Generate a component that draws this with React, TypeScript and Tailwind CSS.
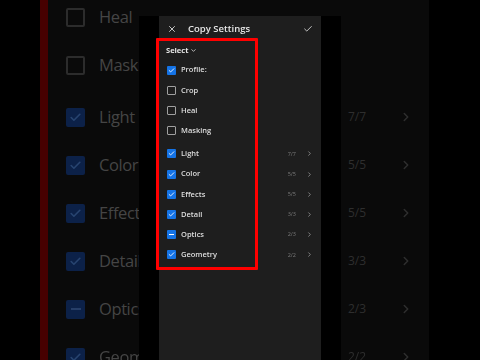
import { X, Check, ChevronDown, ChevronRight } from 'lucide-react'

type Item = { label: string; state: 'on' | 'off' | 'mixed'; count?: string; gap?: boolean }

const items: Item[] = [
  { label: 'Profile:', state: 'on' },
  { label: 'Crop', state: 'off' },
  { label: 'Heal', state: 'off' },
  { label: 'Masking', state: 'off' },
  { label: 'Light', state: 'on', count: '7/7', gap: true },
  { label: 'Color', state: 'on', count: '5/5' },
  { label: 'Effects', state: 'on', count: '5/5' },
  { label: 'Detail', state: 'on', count: '3/3' },
  { label: 'Optics', state: 'mixed', count: '2/3' },
  { label: 'Geometry', state: 'on', count: '2/2' },
]

function Box({ state, big }: { state: Item['state']; big?: boolean }) {
  const size = big ? 'w-[19px] h-[19px] rounded-[2px]' : 'w-[9px] h-[9px] rounded-[1px]'
  if (state === 'off') {
    return <div className={`${size} shrink-0 border ${big ? 'border-[#2c2c2c] border-2' : 'border-[#a0a0a0]'}`} />
  }
  return (
    <div className={`${size} shrink-0 flex items-center justify-center ${big ? 'bg-[#0c2148]' : 'bg-[#1473e6]'}`}>
      {state === 'mixed' ? (
        <div className={big ? 'w-[10px] h-[2px] bg-[#263e68]' : 'w-[5px] h-[1px] bg-white'} />
      ) : (
        <Check className={big ? 'w-[13px] h-[13px] text-[#284470]' : 'w-[7px] h-[7px] text-white'} strokeWidth={3} />
      )}
    </div>
  )
}

export default function App() {
  const bgRows = items.slice(2)
  return (
    <div className="relative w-[480px] h-[360px] bg-black overflow-hidden" style={{ fontFamily: '"Open Sans", "Noto Sans", sans-serif' }}>
      {/* blurred backdrop */}
      <div className="flex h-full blur-[0.6px]">
        <div className="w-[40px] shrink-0" />
        <div className="w-[8px] shrink-0 bg-[#470000]" />
        <div className="w-[381px] shrink-0 bg-[#0a0a0a]">
          <div className="flex flex-col mt-[-7px]">
            {bgRows.map((it) => (
              <div key={it.label} className={`h-[48px] flex items-center pl-[18px] ${it.gap ? 'mt-[4px]' : ''}`}>
                <Box state={it.state} big />
                <span className="ml-[14px] text-[16.5px] tracking-[-0.4px] text-[#454545]">{it.label}</span>
                <div className="flex-1" />
                {it.count && (
                  <>
                    <span className="text-[12px] text-[#2e2e2e] w-[24px]">{it.count}</span>
                    <ChevronRight className="ml-[27px] mr-[16px] w-[14px] h-[14px] text-[#2e2e2e]" strokeWidth={2.5} />
                  </>
                )}
              </div>
            ))}
          </div>
        </div>
      </div>

      {/* dialog */}
      <div className="absolute left-[159px] top-[16px] w-[162px] h-[344px] bg-[#1e1e1e] shadow-[20px_0_0_0_#000,-20px_0_0_0_#000] text-[#e6e6e6]">
        <div className="h-[26px] flex items-center pl-[8px] pr-[8px]">
          <X className="w-[10px] h-[10px]" strokeWidth={2} />
          <span className="ml-[11px] text-[9.5px] font-semibold">Copy Settings</span>
          <div className="flex-1" />
          <Check className="w-[10px] h-[10px]" strokeWidth={2} />
        </div>
        <div className="h-[17px] flex items-center pl-[7px] text-[7.5px] font-bold">
          Select
          <ChevronDown className="ml-[2px] w-[7px] h-[7px]" strokeWidth={2.5} />
        </div>
        <div className="flex flex-col mt-[1px]">
          {items.map((it) => (
            <div key={it.label} className={`h-[20.2px] flex items-center pl-[8px] pr-[8px] ${it.gap ? 'mt-[3px]' : ''}`}>
              <Box state={it.state} />
              <span className="ml-[5px] text-[7.5px] font-semibold text-[#dedede]">{it.label}</span>
              <div className="flex-1" />
              {it.count && (
                <>
                  <span className="text-[5.5px] text-[#7a7a7a]">{it.count}</span>
                  <ChevronRight className="ml-[10px] w-[7px] h-[7px] text-[#a0a0a0]" strokeWidth={2.5} />
                </>
              )}
            </div>
          ))}
        </div>
      </div>

      {/* red highlight */}
      <div className="absolute left-[156px] top-[38px] w-[102px] h-[232px] border-[3px] border-[#ff0000] rounded-[1px]" />
    </div>
  )
}
